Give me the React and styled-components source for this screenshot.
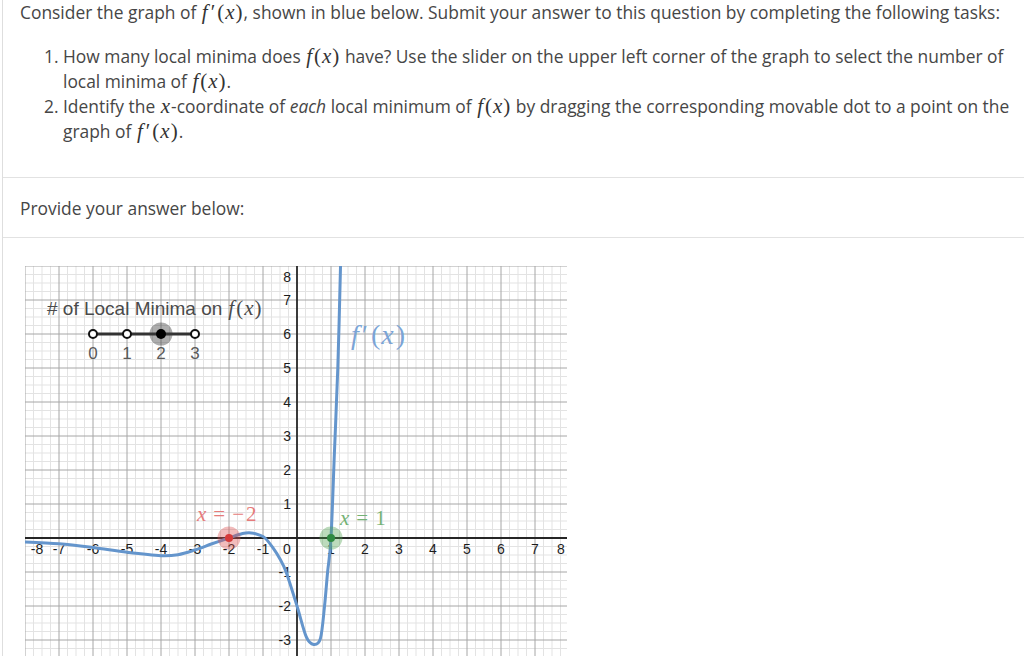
import React from 'react'
import styled, { createGlobalStyle } from 'styled-components'

const GlobalStyle = createGlobalStyle`
  html, body {
    margin: 0;
    padding: 0;
    background: #fff;
    overflow: hidden;
  }
  body {
    font-family: "Open Sans", "Liberation Sans", sans-serif;
  }
`

const Panel = styled.div`
  margin-left: 2px;
  border-left: 1px solid #dedede;
  min-height: 100vh;
  color: #464646;
  font-size: 17.4px;
  line-height: 25px;
`

const Section = styled.div`
  padding: ${(p) => p.$pad};
  border-bottom: ${(p) => (p.$last ? 'none' : '1px solid #e2e2e2')};
`

const Para = styled.p`
  margin: 0;
`

const Steps = styled.ol`
  margin: 19px 0 0;
  padding-left: 43px;
`

const Math = styled.span`
  font-family: "Liberation Serif", "DejaVu Serif", serif;
  font-size: 21px;
  line-height: 1;
  color: #333;
  padding: 0 1px;
`

const I = styled.i`
  font-style: italic;
  padding: 0 ${(p) => p.$pr || '0'} 0 ${(p) => p.$pl || '0'};
`

const Prime = styled.span`
  padding: 0 2px 0 2px;
`

const Em = styled.em`
  font-style: italic;
`

const GraphBox = styled.div`
  padding: 28px 0 0 22px;
`

const Canvas = styled.svg`
  display: block;
  font-family: "Liberation Sans", Arial, sans-serif;
`

const FPrime = () => (
  <Math>
    <I $pr="1px">f</I><Prime>′</Prime>(<I $pl="1px" $pr="1px">x</I>)
  </Math>
)

const FOf = () => (
  <Math>
    <I $pr="2px">f</I>(<I $pl="1px" $pr="1px">x</I>)
  </Math>
)

// graph geometry
const U = 34
const OX = 272
const OY = 272
const W = 542
const H = 400

const curvePts = [
  [-8.3, -0.1], [-7, -0.17], [-6, -0.28], [-5, -0.42], [-4, -0.52], [-3.5, -0.49],
  [-3, -0.35], [-2.5, -0.17], [-2, 0], [-1.6, 0.13], [-1.35, 0.15], [-1.12, 0.09],
  [-0.94, 0], [-0.7, -0.3], [-0.5, -0.62], [-0.32, -1], [0, -2], [0.27, -2.9],
  [0.49, -3.13], [0.69, -2.95], [0.81, -2], [0.9, -1], [1, 0], [1.1, 2.5], [1.2, 5],
  [1.28, 8], [1.31, 9.5],
]

const toPx = ([x, y]) => [OX + x * U, OY - y * U]

const curvePath = () => {
  const p = curvePts.map(toPx)
  let d = `M${p[0][0].toFixed(2)},${p[0][1].toFixed(2)}`
  for (let i = 0; i < p.length - 1; i++) {
    const p0 = p[i - 1] || p[i]
    const p1 = p[i]
    const p2 = p[i + 1]
    const p3 = p[i + 2] || p2
    const c1 = [p1[0] + (p2[0] - p0[0]) / 6, p1[1] + (p2[1] - p0[1]) / 6]
    const c2 = [p2[0] - (p3[0] - p1[0]) / 6, p2[1] - (p3[1] - p1[1]) / 6]
    d += ` C${c1[0].toFixed(2)},${c1[1].toFixed(2)} ${c2[0].toFixed(2)},${c2[1].toFixed(2)} ${p2[0].toFixed(2)},${p2[1].toFixed(2)}`
  }
  return d
}

const range = (a, b) => Array.from({ length: b - a + 1 }, (_, i) => a + i)

const Grid = () => {
  const step = U / 4
  const vLines = range(-32, 32).map((k) => ({ k, x: OX + k * step })).filter((l) => l.x >= 0 && l.x <= W)
  const hLines = range(-20, 32).map((k) => ({ k, y: OY - k * step })).filter((l) => l.y >= 0 && l.y <= H)
  return (
    <g>
      {vLines.filter((l) => l.k % 4 !== 0).map((l) => (
        <line key={'vm' + l.k} x1={l.x} x2={l.x} y1={0} y2={H} stroke="#e3e3e3" strokeWidth="1" />
      ))}
      {hLines.filter((l) => l.k % 4 !== 0).map((l) => (
        <line key={'hm' + l.k} x1={0} x2={W} y1={l.y} y2={l.y} stroke="#e3e3e3" strokeWidth="1" />
      ))}
      {vLines.filter((l) => l.k % 4 === 0 && l.k !== 0).map((l) => (
        <line key={'vM' + l.k} x1={l.x} x2={l.x} y1={0} y2={H} stroke="#a6a6a6" strokeWidth="1" />
      ))}
      {hLines.filter((l) => l.k % 4 === 0 && l.k !== 0).map((l) => (
        <line key={'hM' + l.k} x1={0} x2={W} y1={l.y} y2={l.y} stroke="#a6a6a6" strokeWidth="1" />
      ))}
      <line x1={OX} x2={OX} y1={0} y2={H} stroke="#252525" strokeWidth="1.8" />
      <line x1={0} x2={W} y1={OY} y2={OY} stroke="#252525" strokeWidth="1.8" />
    </g>
  )
}

const AxisLabels = () => {
  const xs = range(-8, 8).filter((n) => n !== 0)
  const ys = range(-3, 8).filter((n) => n !== 0)
  return (
    <g fontSize="14" fill="#1c1c1c">
      {xs.map((n) => {
        let x = OX + n * U
        if (n === -8) x = 12
        if (n === 8) x = 536
        return (
          <text key={'x' + n} x={x} y={OY + 16} textAnchor="middle">
            {n}
          </text>
        )
      })}
      <text x={262} y={OY + 16} textAnchor="middle">0</text>
      {ys.map((n) => {
        let y = OY - n * U + 5
        if (n === 8) y = 16
        return (
          <text key={'y' + n} x={266} y={y} textAnchor="end">
            {n}
          </text>
        )
      })}
    </g>
  )
}

const Slider = () => {
  const sy = 68
  const xs = [68, 102, 136, 170]
  const serif = '"Liberation Serif", serif'
  return (
    <g>
      <text x={22} y={49} fontSize="19" fill="#4a4a4a">
        # of Local Minima on
        <tspan dx="6" fontFamily={serif} fontStyle="italic" fontSize="21">f</tspan>
        <tspan dx="2" fontFamily={serif} fontSize="21">(</tspan>
        <tspan dx="1" fontFamily={serif} fontStyle="italic" fontSize="21">x</tspan>
        <tspan dx="1" fontFamily={serif} fontSize="21">)</tspan>
      </text>
      <line x1={xs[0]} x2={xs[3]} y1={sy} y2={sy} stroke="#333" strokeWidth="3" />
      <circle cx={xs[2]} cy={sy} r="11.5" fill="rgba(60,60,60,0.42)" />
      {[0, 1, 3].map((i) => (
        <circle key={i} cx={xs[i]} cy={sy} r="4" fill="#fff" stroke="#111" strokeWidth="2" />
      ))}
      <circle cx={xs[2]} cy={sy} r="5" fill="#000" />
      {xs.map((x, i) => (
        <text key={'s' + i} x={x} y={93} fontSize="17" fill="#5a5a5a" textAnchor="middle">
          {i}
        </text>
      ))}
    </g>
  )
}

const PointLabel = ({ x, y, color, sign, digit }) => (
  <text x={x} y={y} fontFamily='"Liberation Serif", serif' fontSize="21" fill={color}>
    <tspan fontStyle="italic">x</tspan>
    <tspan dx="7">=</tspan>
    {sign && <tspan dx="7">{sign}</tspan>}
    <tspan dx={sign ? 2 : 7}>{digit}</tspan>
  </text>
)

const Graph = () => (
  <Canvas width={W} height={H} viewBox={`0 0 ${W} ${H}`}>
    <rect x="0" y="0" width={W} height={H} fill="#fff" />
    <Grid />
    <AxisLabels />
    <Slider />
    <path d={curvePath()} fill="none" stroke="#6495cc" strokeWidth="3" strokeLinecap="round" />
    <text x={326} y={78} fontFamily='"Liberation Serif", serif' fontSize="28" fill="#7ba4d6">
      <tspan fontStyle="italic">f</tspan>
      <tspan dx="3">′</tspan>
      <tspan dx="3">(</tspan>
      <tspan dx="1" fontStyle="italic">x</tspan>
      <tspan dx="2">)</tspan>
    </text>
    <circle cx={OX - 2 * U} cy={OY} r="11.5" fill="rgba(222,80,80,0.38)" />
    <circle cx={OX - 2 * U} cy={OY} r="4" fill="#d63a3a" />
    <PointLabel x={172} y={255} color="#e57b7b" sign="−" digit="2" />
    <circle cx={OX + U} cy={OY} r="11.5" fill="rgba(80,160,80,0.38)" />
    <circle cx={OX + U} cy={OY} r="4" fill="#2f8a42" />
    <PointLabel x={315} y={259} color="#74b274" digit="1" />
  </Canvas>
)

const App = () => {
  return (
    <>
      <GlobalStyle />
      <Panel>
        <Section $pad="0 0 33px 17px">
          <Para>
            Consider the graph of <FPrime />, shown in blue below. Submit your answer to this question by completing the following tasks:
          </Para>
          <Steps>
            <li>
              How many local minima does <FOf /> have? Use the slider on the upper left corner of the graph to select the number of local minima of <FOf />.
            </li>
            <li>
              Identify the <Math><I>x</I></Math>-coordinate of <Em>each</Em> local minimum of <FOf /> by dragging the corresponding movable dot to a point on the graph of <FPrime />.
            </li>
          </Steps>
        </Section>
        <Section $pad="18px 20px 16px 17px">
          <Para>Provide your answer below:</Para>
        </Section>
        <Section $pad="0" $last>
          <GraphBox>
            <Graph />
          </GraphBox>
        </Section>
      </Panel>
    </>
  )
}

export default App
